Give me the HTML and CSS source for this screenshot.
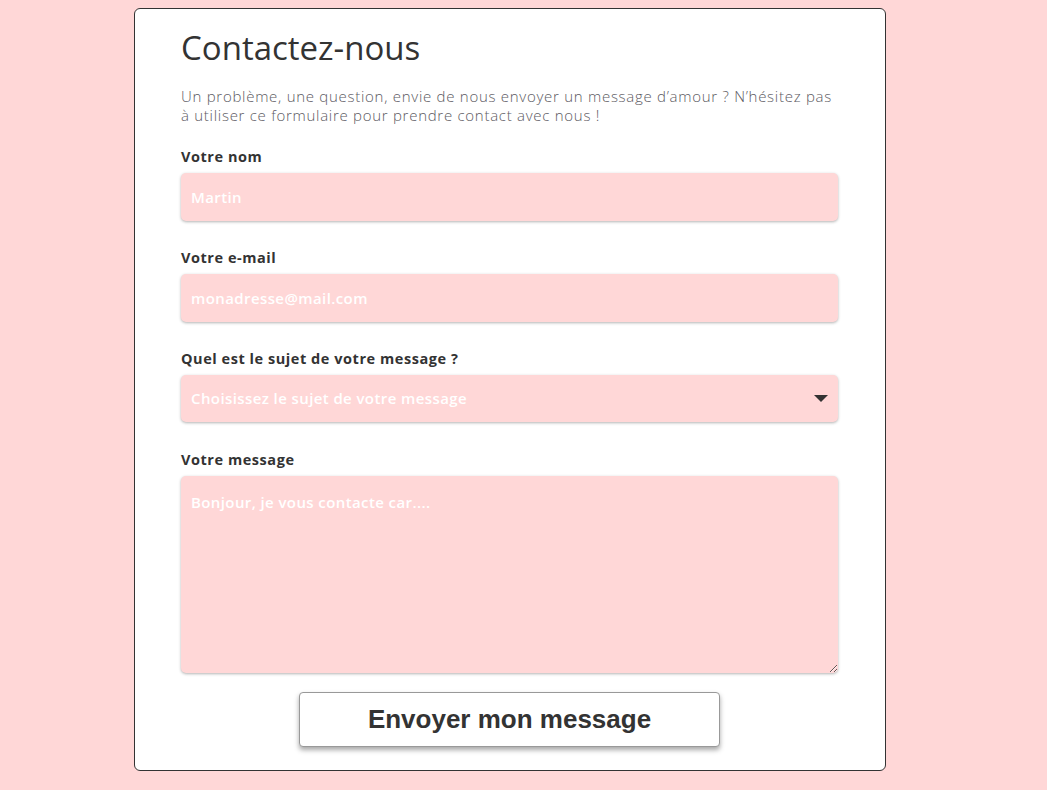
FILE: index.html
```html
<!DOCTYPE html>
<html lang="fr">
<head>
<meta charset="utf-8">
<title>Contactez-nous</title>
<link rel="stylesheet" href="styles.css">
</head>
<body>
<main class="card">
  <h1 class="title">Contactez-nous</h1>
  <p class="intro">Un problème, une question, envie de nous envoyer un message d’amour ? N’hésitez pas à utiliser ce formulaire pour prendre contact avec nous !</p>
  <form class="form">
    <div class="field">
      <label class="label" for="nom">Votre nom</label>
      <input class="input" id="nom" type="text" placeholder="Martin">
    </div>
    <div class="field">
      <label class="label" for="mail">Votre e-mail</label>
      <input class="input" id="mail" type="email" placeholder="monadresse@mail.com">
    </div>
    <div class="field field-select">
      <label class="label" for="sujet">Quel est le sujet de votre message ?</label>
      <div class="select-wrap">
        <select class="input select" id="sujet">
          <option>Choisissez le sujet de votre message</option>
        </select>
      </div>
    </div>
    <div class="field">
      <label class="label" for="msg">Votre message</label>
      <textarea class="input textarea" id="msg" placeholder="Bonjour, je vous contacte car...."></textarea>
    </div>
    <div class="actions">
      <button class="button" type="button">Envoyer mon message</button>
    </div>
  </form>
</main>
</body>
</html>
```
FILE: styles.css
```css
html, body {
  margin: 0;
  padding: 0;
}
body {
  background: #ffd7d7;
  padding-top: 8px;
  font-family: "Open Sans", "DejaVu Sans", sans-serif;
  color: #333;
}
.card {
  box-sizing: border-box;
  width: 752px;
  height: 763px;
  margin-left: 134px;
  background: #fff;
  border: 1px solid #333;
  border-radius: 6px;
  padding: 20px 47px 0 46px;
}
.title {
  margin: 0;
  font-size: 33px;
  line-height: 37px;
  font-weight: 400;
  color: #333;
}
.intro {
  margin: 21px 0 24px;
  font-size: 15px;
  line-height: 19px;
  font-weight: 300;
  letter-spacing: 0.72px;
  color: #5c5a62;
}
.form {
  display: flex;
  flex-direction: column;
}
.field {
  display: flex;
  flex-direction: column;
  margin-bottom: 29px;
}
.field-select {
  margin-bottom: 30px;
}
.label {
  font-size: 14.5px;
  line-height: 16px;
  font-weight: 700;
  letter-spacing: 0.55px;
  margin-bottom: 8px;
  color: #333;
}
.input {
  box-sizing: border-box;
  width: 657px;
  height: 48px;
  border: none;
  border-radius: 5px;
  background: #ffd7d7;
  box-shadow: 0 1px 3px rgba(0,0,0,0.3);
  padding: 0 10px;
  font-family: "Open Sans", "DejaVu Sans", sans-serif;
  font-size: 15px;
  font-weight: 600;
  letter-spacing: 0.4px;
  color: #fff;
  outline: none;
}
.input::placeholder {
  color: #fff;
  opacity: 1;
}
.select-wrap {
  position: relative;
}
.select {
  appearance: none;
  -webkit-appearance: none;
  height: 47px;
  padding-bottom: 2px;
}
.select-wrap::after {
  content: "";
  position: absolute;
  right: 10px;
  top: 20px;
  border-left: 7px solid transparent;
  border-right: 7px solid transparent;
  border-top: 7px solid #333;
}
.textarea {
  height: 197px;
  padding: 16px 10px;
  resize: vertical;
}
.actions {
  display: flex;
  justify-content: center;
  margin-top: -10px;
}
.button {
  width: 421px;
  height: 55px;
  background: #fff;
  border: 1px solid #999;
  border-radius: 4px;
  box-shadow: 0 3px 5px rgba(0,0,0,0.35);
  font-family: "Liberation Sans", Arial, sans-serif;
  font-size: 26px;
  font-weight: 700;
  color: #333;
}
```
